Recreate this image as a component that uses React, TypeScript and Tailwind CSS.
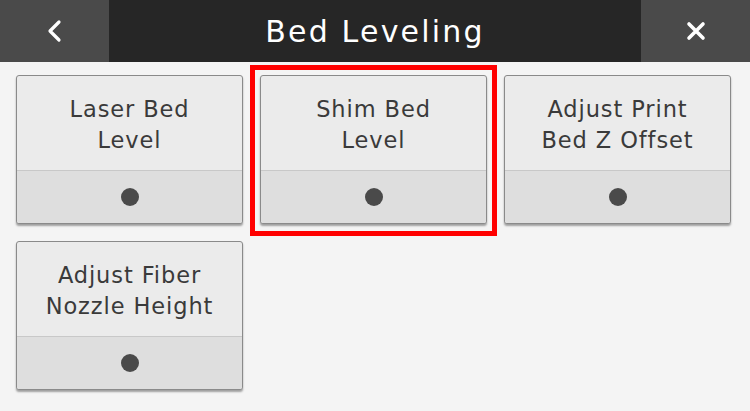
import React from "react";

const items = ["Laser Bed\nLevel", "Shim Bed\nLevel", "Adjust Print\nBed Z Offset", "Adjust Fiber\nNozzle Height"];

function Card({ label, selected }: { label: string; selected?: boolean }) {
  const card = (
    <div className="w-[227px] h-[149px] flex flex-col rounded-[3px] border border-[#8a8a8a] bg-[#ebebeb] shadow-[0_2px_2px_rgba(0,0,0,0.35)] overflow-hidden">
      <div className="h-[94px] pt-[3px] flex items-center justify-center text-center text-[22.5px] leading-[31px] tracking-[0.9px] text-[#3a3a3a] whitespace-pre-line">
        {label}
      </div>
      <div className="flex-1 border-t border-[#c8c8c8] bg-[#dedede] flex items-center justify-center">
        <div className="w-[18px] h-[18px] rounded-full bg-[#4a4a4a]" />
      </div>
    </div>
  );
  return (
    <div className="relative w-[227px] h-[149px]">
      {selected && (
        <div className="absolute left-[-10px] top-[-10px] w-[247px] h-[171px] border-[5px] border-[#ff0000]" />
      )}
      <div className="relative">{card}</div>
    </div>
  );
}

export default function App() {
  return (
    <div className="w-[750px] h-[411px] bg-[#f4f4f4] overflow-hidden" style={{ fontFamily: '"DejaVu Sans", sans-serif' }}>
      <div className="h-[62px] flex bg-[#262626]">
        <div className="w-[109px] bg-[#4a4a4a] flex items-center justify-center">
          <svg width="20" height="24" viewBox="0 0 20 24">
            <path d="M14 3 L5 12 L14 21" stroke="#fff" strokeWidth="3.2" fill="none" strokeLinecap="round" strokeLinejoin="round" />
          </svg>
        </div>
        <div className="flex-1 flex items-center justify-center text-white text-[30px] tracking-[2.2px]">Bed Leveling</div>
        <div className="w-[109px] bg-[#4a4a4a] flex items-center justify-center">
          <svg width="20" height="20" viewBox="0 0 20 20">
            <path d="M3 3 L17 17 M17 3 L3 17" stroke="#fff" strokeWidth="3.6" strokeLinecap="round" />
          </svg>
        </div>
      </div>
      <div className="grid grid-cols-[227px_227px_227px] gap-[17px] pl-[16px] pt-[13px]">
        {items.map((t, i) => (
          <Card key={i} label={t} selected={i === 1} />
        ))}
      </div>
    </div>
  );
}
